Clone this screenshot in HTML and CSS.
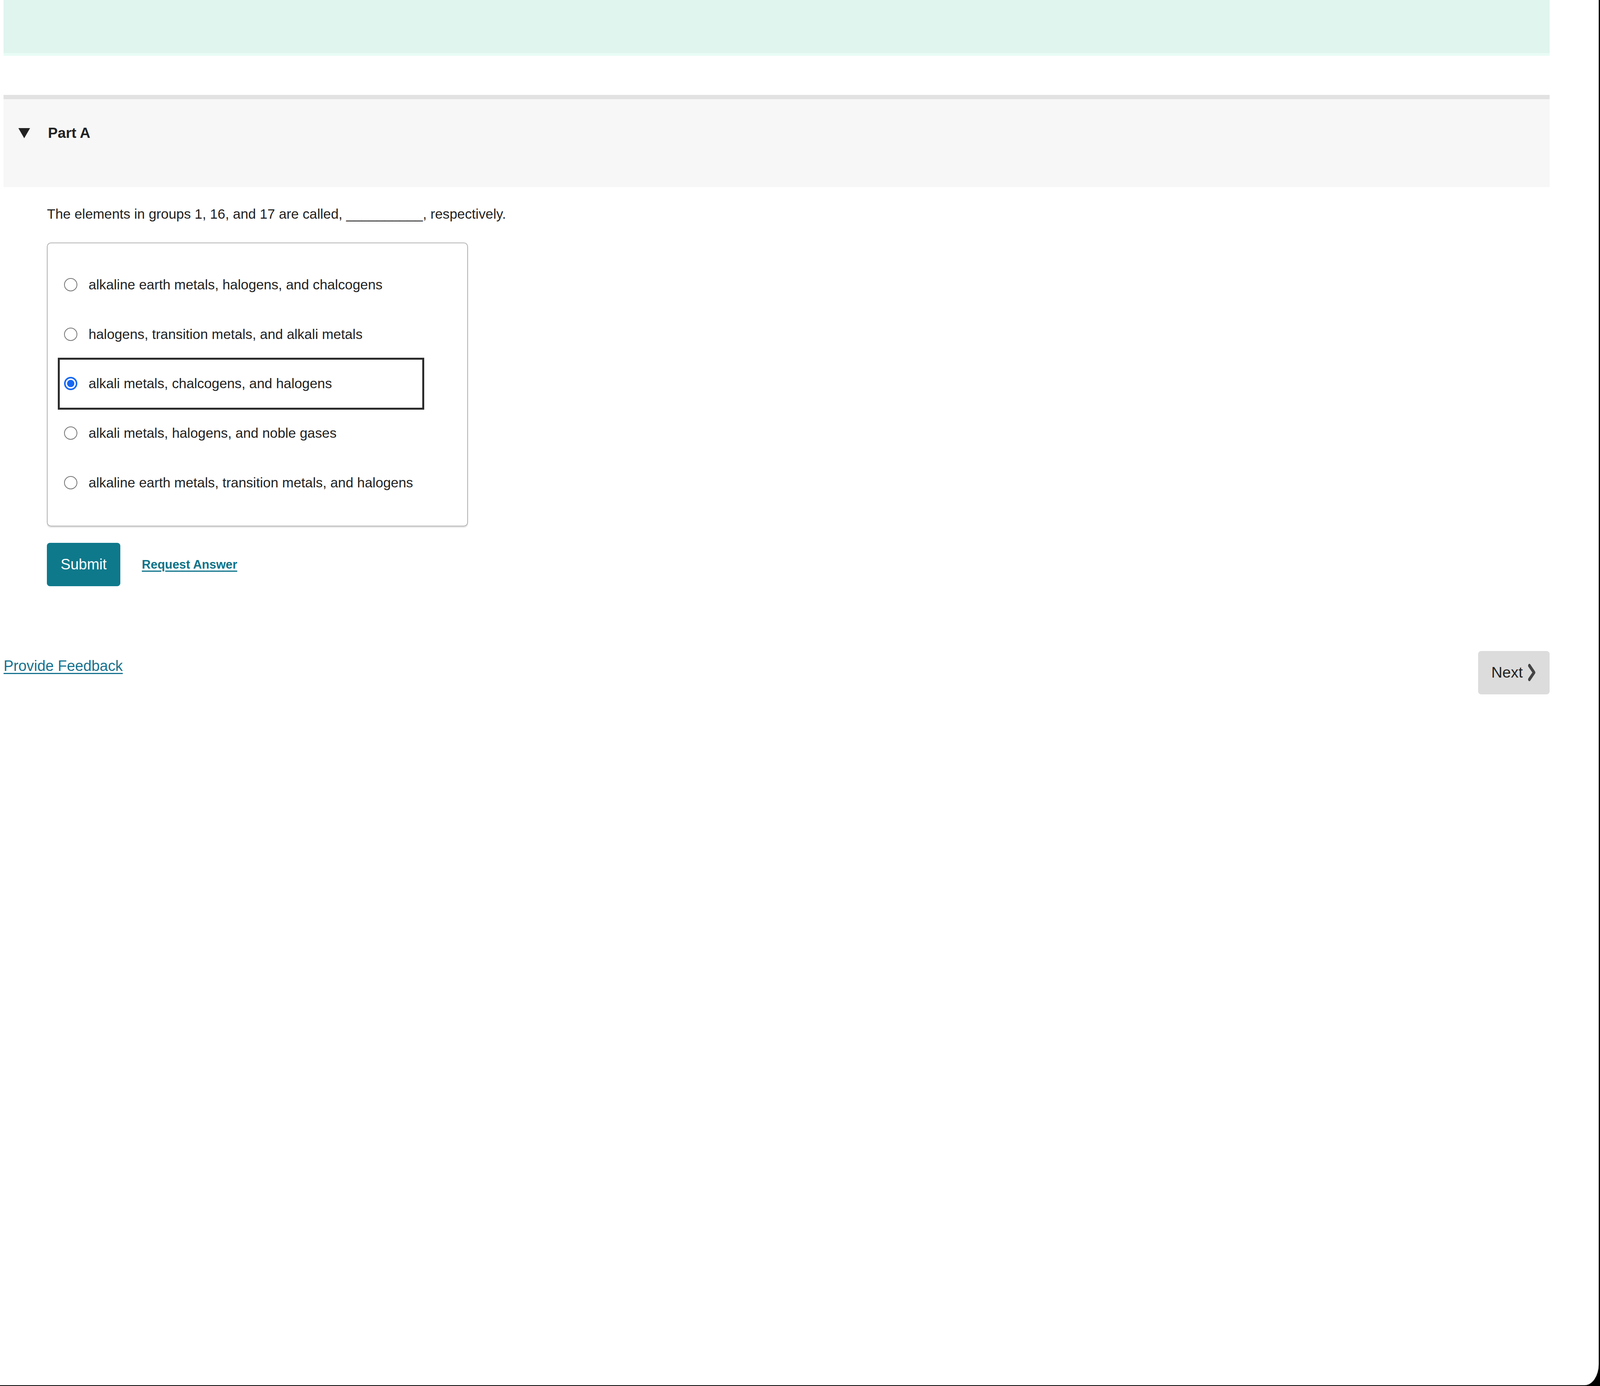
FILE: index.html
```html
<!DOCTYPE html>
<html lang="en">
<head>
<meta charset="utf-8">
<title>Part A</title>
<link rel="stylesheet" href="styles.css">
</head>
<body>
<div class="window">
  <div class="page">
    <div class="banner"></div>

    <section class="part">
      <div class="part-header">
        <span class="caret"></span>
        <h2 class="part-title">Part A</h2>
      </div>

      <div class="part-body">
        <p class="question">The elements in groups 1, 16, and 17 are called, __________, respectively.</p>

        <div class="choices">
          <label class="choice"><input type="radio" name="ans" class="radio"><span>alkaline earth metals, halogens, and chalcogens</span></label>
          <label class="choice"><input type="radio" name="ans" class="radio"><span>halogens, transition metals, and alkali metals</span></label>
          <label class="choice selected"><input type="radio" name="ans" class="radio" checked><span>alkali metals, chalcogens, and halogens</span></label>
          <label class="choice"><input type="radio" name="ans" class="radio"><span>alkali metals, halogens, and noble gases</span></label>
          <label class="choice"><input type="radio" name="ans" class="radio"><span>alkaline earth metals, transition metals, and halogens</span></label>
        </div>

        <div class="actions">
          <button class="submit" type="button">Submit</button>
          <a class="request" href="#">Request Answer</a>
        </div>
      </div>
    </section>

    <div class="footer">
      <a class="feedback" href="#">Provide Feedback</a>
      <button class="next" type="button">Next
        <svg class="chev" viewBox="0 0 8 12" preserveAspectRatio="none" aria-hidden="true"><path d="M1.6 1.4 L6.2 6 L1.6 10.6" fill="none" stroke="#444" stroke-width="2.4" stroke-linecap="round" stroke-linejoin="round"/></svg>
      </button>
    </div>
  </div>
</div>
</body>
</html>
```

FILE: styles.css
```css
/* The reference is drawn on a 1568 x 923.3 unit grid.
   --x: one horizontal unit, --y: one vertical unit, --m: the smaller one (text, circles). */
:root {
  --x: calc(100vw / 1568);
  --y: calc(100vh / 923.3);
  --m: min(var(--x), var(--y));
}

html {
  margin: 0;
  background: #000;
}

body {
  margin: 0;
  background: #000;
  overflow: hidden;
}

.window {
  width: calc(100vw - 1.3 * var(--x));
  height: calc(100vh - 0.5 * var(--y));
  box-sizing: border-box;
  background: #fff;
  border-right: calc(0.8 * var(--x)) solid #e4e4e4;
  border-bottom-right-radius: calc(14 * var(--x)) calc(14 * var(--y));
  overflow: hidden;
  padding-left: calc(3.5 * var(--x));
  font-family: "Liberation Sans", Arial, Helvetica, sans-serif;
  color: #222;
}

.page {
  width: calc(1515 * var(--x));
}

.banner {
  height: calc(35.5 * var(--y));
  background: #dff5ee;
  border-bottom: calc(2 * var(--y)) solid #e9fcf6;
}

.part {
  margin-top: calc(25.8 * var(--y));
}

.part-header {
  display: flex;
  align-items: center;
  background: #f7f7f7;
  border-top: calc(3 * var(--y)) solid #e2e2e2;
  padding: calc(12.7 * var(--y)) 0 calc(25.9 * var(--y)) calc(14.5 * var(--x));
}

.caret {
  width: 0;
  height: 0;
  border-left: calc(6 * var(--x)) solid transparent;
  border-right: calc(6 * var(--x)) solid transparent;
  border-top: calc(7 * var(--y)) solid #222;
  margin-right: calc(17.5 * var(--x));
}

.part-title {
  margin: 0;
  font-size: calc(14.3 * var(--m));
  line-height: calc(20 * var(--y));
  font-weight: bold;
  color: #222;
}

.part-body {
  padding-left: calc(42.5 * var(--x));
}

.question {
  margin: calc(8 * var(--y)) 0 0 0;
  font-size: calc(13.5 * var(--m));
  line-height: calc(20 * var(--y));
  color: #222;
}

.choices {
  margin-top: calc(9 * var(--y));
  width: calc(384 * var(--x));
  border: calc(1 * var(--m)) solid #b4b4b4;
  border-radius: calc(4 * var(--m));
  box-shadow: 0 calc(1 * var(--m)) calc(1 * var(--m)) rgba(0, 0, 0, 0.12);
  padding: calc(11 * var(--y)) calc(16 * var(--x)) calc(12 * var(--y)) calc(11 * var(--x));
}

.choice {
  display: flex;
  align-items: center;
  height: calc(33 * var(--y));
  width: calc(357 * var(--x));
  padding-left: calc(5 * var(--x));
  box-sizing: border-box;
  font-size: calc(13.5 * var(--m));
  color: #222;
  cursor: pointer;
}

.choice.selected {
  outline: calc(2 * var(--m)) solid #2b2b2b;
  outline-offset: calc(-1 * var(--m));
}

.radio {
  appearance: none;
  -webkit-appearance: none;
  width: calc(13 * var(--m));
  height: calc(13 * var(--m));
  margin: 0 calc(11 * var(--x) + 6.5 * var(--x) - 6.5 * var(--m)) 0 calc(6.5 * var(--x) - 6.5 * var(--m));
  border: calc(1 * var(--m)) solid #767676;
  border-radius: 50%;
  background: #fff;
  box-sizing: border-box;
  flex: none;
}

.radio:checked {
  border: calc(1.6 * var(--m)) solid #1668f2;
  background: radial-gradient(circle, #1668f2 0 calc(3.4 * var(--m)), #fff calc(3.7 * var(--m)));
}

.actions {
  display: flex;
  align-items: center;
  margin-top: calc(11 * var(--y));
}

.submit {
  width: calc(72 * var(--x));
  height: calc(29 * var(--y));
  background: #0e798b;
  color: #fff;
  border: none;
  border-radius: calc(3 * var(--m));
  font-family: "Liberation Sans", Arial, Helvetica, sans-serif;
  font-size: calc(14.5 * var(--m));
  padding: 0;
  margin-right: calc(21 * var(--x));
}

.request {
  font-size: calc(12 * var(--m));
  font-weight: bold;
  color: #0c7389;
  text-decoration: underline;
  text-decoration-thickness: calc(1 * var(--m));
  text-underline-offset: calc(2 * var(--m));
}

.footer {
  display: flex;
  justify-content: space-between;
  align-items: flex-start;
  margin-top: calc(43 * var(--y));
}

.feedback {
  font-size: calc(14.5 * var(--m));
  line-height: calc(20 * var(--y));
  color: #17728f;
  text-decoration: underline;
  text-decoration-thickness: calc(1 * var(--m));
  text-underline-offset: calc(2 * var(--m));
}

.next {
  display: flex;
  align-items: center;
  gap: calc(5 * var(--x));
  height: calc(29 * var(--y));
  width: calc(70 * var(--x));
  padding: 0 0 0 calc(13 * var(--x));
  background: #dcdcdc;
  border: none;
  border-radius: calc(3 * var(--m));
  font-family: "Liberation Sans", Arial, Helvetica, sans-serif;
  font-size: calc(15 * var(--m));
  color: #222;
}

.chev {
  display: block;
  width: calc(8 * var(--x));
  height: calc(12 * var(--y));
}
```
